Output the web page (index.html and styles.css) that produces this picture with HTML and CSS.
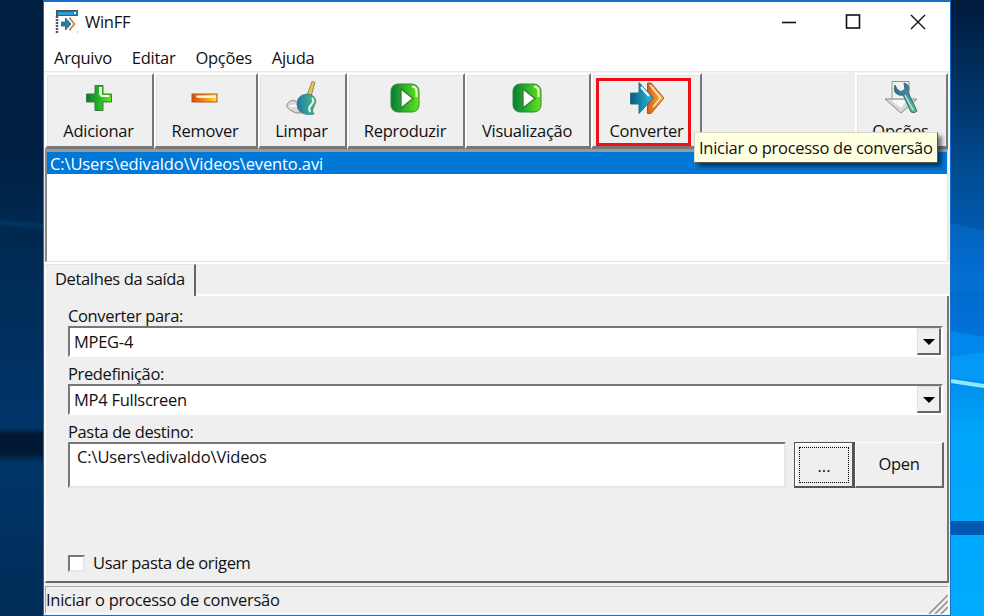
FILE: index.html
```
<!DOCTYPE html>
<html lang="pt-BR">
<head>
    <meta charset="UTF-8">
    <title>WinFF</title>
    <link rel="stylesheet" href="styles.css">
</head>
<body>
    <div class="wall wall-left"></div>
    <main class="window">
        <header class="titlebar">
            <svg class="app-icon" width="24" height="24" viewBox="0 0 24 24">
                <rect x="1" y="0" width="22" height="6" fill="#4c5a66"/>
                <rect x="3" y="2" width="17" height="3" fill="#2f9fd8"/>
                <rect x="18" y="1" width="4" height="4" fill="#1689cf"/>
                <rect x="19" y="2" width="2" height="2" fill="#fff"/>
                <path d="M2 6V23" stroke="#555" stroke-width="2.500" stroke-dasharray="2 1"/>
                <path d="M22 22h1" stroke="#999"/>
                <path d="M6.500 12h4V8l5.500 6-5.500 6v-4h-4z" fill="#267fae" stroke="#33566c" stroke-width=".8"/>
                <path d="M14.500 8l5 6-5 6" fill="none" stroke="#b5562a" stroke-width="1.600"/>
                <path d="M16 9.500l4 4.500-4 4.500" fill="none" stroke="#f1b53c" stroke-width="1"/>
            </svg>
            <span class="title">WinFF</span>
            <svg class="controls" width="146" height="20" viewBox="0 0 146 20" fill="none" stroke="#111" stroke-width="1.600">
                <path d="M1 11.500H15"/>
                <rect x="65.500" y="4" width="13" height="13"/>
                <path d="M130 4l14 14M144 4l-14 14" stroke-width="1.400"/>
            </svg>
        </header>
        <nav class="menu">
            <span>Arquivo</span>
            <span>Editar</span>
            <span>Opções</span>
            <span>Ajuda</span>
        </nav>
        <div class="toolbar">
            <div class="tool add">
                <svg width="34" height="34" viewBox="0 0 34 34">
                    <defs>
                        <linearGradient id="green"><stop offset="0" stop-color="#087b36"/><stop offset=".5" stop-color="#27b52b"/><stop offset="1" stop-color="#67e51b"/></linearGradient>
                    </defs>
                    <path d="M13 4.500h8v8.500h8.500v8H21v8.500h-8V21H4.500v-8H13z" fill="url(#green)" stroke="#3c7a36"/>
                    <path d="M17 6h3v8h7v2h-6q-4 0-4-4z" fill="#e6ffe0"/>
                </svg>
                <span>Adicionar</span>
            </div>
            <div class="tool remove">
                <svg width="34" height="34" viewBox="0 0 34 34">
                    <defs>
                        <linearGradient id="orange"><stop offset="0" stop-color="#e2490c"/><stop offset=".5" stop-color="#f58b12"/><stop offset="1" stop-color="#fde32c"/></linearGradient>
                    </defs>
                    <rect x="4" y="13" width="25" height="8" fill="url(#orange)" stroke="#a65d2c"/>
                    <path d="M8 14.500h20v2.500H11q-3 0-3-2.500z" fill="#fff3d0"/>
                </svg>
                <span>Remover</span>
            </div>
            <div class="tool clean">
                <svg width="34" height="36" viewBox="0 0 34 36">
                    <defs>
                        <linearGradient id="brush"><stop offset="0" stop-color="#2873a4"/><stop offset=".45" stop-color="#2e9b9d"/><stop offset="1" stop-color="#54ba78"/></linearGradient>
                    </defs>
                    <path d="M15 24q-7-6-11-2-5 4 1 8 5 4 11 3z" fill="#d9d9d9" stroke="#8d8d8d"/>
                    <path d="M5 27q4-3 9 0" fill="none" stroke="#fff" stroke-width="2"/>
                    <path d="M27 1.500l3 1-4 14-4-1z" fill="#e8c84e" stroke="#93845b"/>
                    <path d="M22 14q-10 1-10 10 0 8 8 10 5 1 9 0-3-3 0-8 4-6-1-10-2-2-6-2z" fill="url(#brush)" stroke="#38737b" stroke-width=".8"/>
                    <path d="M27 18q3 3-1 7-3 3-1 7" fill="none" stroke="#e8faf2" stroke-width="2"/>
                </svg>
                <span>Limpar</span>
            </div>
            <div class="tool play">
                <svg width="34" height="34" viewBox="0 0 34 34">
                    <rect x="3" y="3" width="28" height="28" rx="7" fill="url(#green)" stroke="#348537"/>
                    <path d="M24 5.500q4.500.5 4.500 4.500v6" fill="none" stroke="#e9ffc8" stroke-width="2"/>
                    <path d="M13 8l12 9.500L13 27z" fill="#fff" stroke="#347a2e" stroke-width="1.300"/>
                </svg>
                <span>Reproduzir</span>
            </div>
            <div class="tool preview">
                <svg width="34" height="34" viewBox="0 0 34 34">
                    <rect x="3" y="3" width="28" height="28" rx="7" fill="url(#green)" stroke="#348537"/>
                    <path d="M24 5.500q4.500.5 4.500 4.500v6" fill="none" stroke="#e9ffc8" stroke-width="2"/>
                    <path d="M13 8l12 9.500L13 27z" fill="#fff" stroke="#347a2e" stroke-width="1.300"/>
                </svg>
                <span>Visualização</span>
            </div>
            <div class="tool convert">
                <svg width="36" height="34" viewBox="0 0 36 34">
                    <defs>
                        <linearGradient id="blue"><stop offset="0" stop-color="#075982"/><stop offset="1" stop-color="#2bc1d8"/></linearGradient>
                        <linearGradient id="gold"><stop offset="0" stop-color="#dc5b18"/><stop offset="1" stop-color="#f7c42c"/></linearGradient>
                    </defs>
                    <path d="M18.500 2H22l13 15-13 15.500h-3.500V24l5.500-7-5.500-7z" fill="url(#gold)" stroke="#a15330"/>
                    <path d="M21 4l10 12" stroke="#ffe9c8" stroke-width="1.500"/>
                    <path d="M1.500 12H10V1.500L24 17 10 32.500V23H1.500z" fill="url(#blue)" stroke="#26718c"/>
                    <path d="M24 6v2l7.500 9-7.500 9" fill="none" stroke="#fbe7cf" stroke-width="1.200"/>
                    <path d="M12 6l8 9" stroke="#effcff" stroke-width="2.500"/>
                </svg>
                <span>Converter</span>
                <div class="marker"></div>
            </div>
            <div class="spacer"></div>
            <div class="tool options">
                <svg width="36" height="36" viewBox="0 0 36 36">
                    <path d="M9 2.500h17v21H9z" fill="#f2f2f2" stroke="#8d9495"/>
                    <path d="M2 20h32L18 34z" fill="#d7d9d9" stroke="#878b8b"/>
                    <path d="M8 21h16l-6 8z" fill="#f8f8f8"/>
                    <defs>
                        <linearGradient id="wrench" x1="0" y1="0" x2="1" y2="1"><stop offset="0" stop-color="#285f93"/><stop offset=".5" stop-color="#438ea1"/><stop offset="1" stop-color="#5dc788"/></linearGradient>
                    </defs>
                    <path d="M12 6q-2 7 2 9 3 2 6 1l8 17q3 2 6-1L25 13q3-7-4-9l1 6-4 3-4-3z" fill="url(#wrench)" stroke="#3c6d77"/>
                    <path d="M22 16l8 15" stroke="#c4eddb" stroke-width="1.500"/>
                </svg>
                <span>Opções</span>
            </div>
            <div class="tooltip"><span>Iniciar o processo de conversão</span></div>
        </div>
        <div class="files">
            <div class="file"><span>C:\Users\edivaldo\Videos\evento.avi</span></div>
        </div>
        <div class="tabs">
            <div class="tab"><span>Detalhes da saída</span></div>
            <div class="tab-rest"></div>
        </div>
        <section class="page">
            <div class="label"><span>Converter para:</span></div>
            <div class="combo">
                <span>MPEG-4</span>
                <div class="drop"></div>
            </div>
            <div class="label next"><span>Predefinição:</span></div>
            <div class="combo">
                <span>MP4 Fullscreen</span>
                <div class="drop"></div>
            </div>
            <div class="label next"><span>Pasta de destino:</span></div>
            <div class="folder">
                <div class="path"><span>C:\Users\edivaldo\Videos</span></div>
                <div class="browse"><div class="focus">...</div></div>
                <div class="open"><span>Open</span></div>
            </div>
            <div class="check">
                <div class="box"></div>
                <span>Usar pasta de origem</span>
            </div>
        </section>
        <footer class="status">
            <span>Iniciar o processo de conversão</span>
            <svg width="20" height="20" viewBox="0 0 20 20" stroke="#8c8c8c" stroke-width="1.500">
                <path d="M1 20L20 1M7 20L20 7M13 20l7-7"/>
            </svg>
        </footer>
    </main>
    <div class="wall wall-right">
        <svg width="33" height="616" viewBox="0 0 33 616">
            <defs>
                <linearGradient id="sky" x1="0" y1="0" x2="0" y2="1">
                    <stop offset="0" stop-color="#001a3a"/>
                    <stop offset=".09" stop-color="#002a55"/>
                    <stop offset=".2" stop-color="#003c77"/>
                    <stop offset=".3" stop-color="#00509a"/>
                    <stop offset=".37" stop-color="#0059ad"/>
                    <stop offset=".45" stop-color="#0068cb"/>
                    <stop offset=".54" stop-color="#0072d8"/>
                    <stop offset=".62" stop-color="#0090ee"/>
                    <stop offset=".7" stop-color="#00a5fa"/>
                    <stop offset="1" stop-color="#00acff"/>
                </linearGradient>
            </defs>
            <rect width="33" height="616" fill="url(#sky)"/>
            <path d="M0 223l33 8v60H0z" fill="#0878df" opacity=".35"/>
            <path d="M0 331l33 6v17l-33 4z" fill="#0087ed"/>
            <path d="M0 357l33-5v29l-33-3z" fill="#0499f5"/>
            <path d="M0 381l33 5" stroke="#8eeaff" stroke-width="4"/>
            <rect y="521" width="33" height="14" fill="#0058b0"/>
        </svg>
    </div>
</body>
</html>
```
FILE: styles.css
```
* {
    box-sizing: border-box;
}
body {
    margin: 0;
    width: 984px;
    height: 616px;
    overflow: hidden;
    display: flex;
    font-family: "Open Sans", "Noto Sans", sans-serif;
    font-size: 16.5px;
    line-height: 22px;
    letter-spacing: -0.27px;
    color: #111;
    background: #002c58;
}
span {
    white-space: nowrap;
}
svg {
    display: block;
    flex: none;
}
.wall-left {
    width: 43px;
    background:
        linear-gradient(transparent 428px, #001834 434px, #001834 454px, transparent 462px),
        linear-gradient(184deg, #00407300 221px, #00407399 225px, #00407300 230px),
        linear-gradient(#001e3f, #001f42 140px, #002850 225px, #002f5d 330px, #00356a 425px, #003568 470px, #002c57);
}
.wall-right {
    width: 33px;
}
.window {
    width: 908px;
    height: 616px;
    border: 1px solid #1672c6;
    border-top-width: 2px;
    background: #efefef;
    display: flex;
    flex-direction: column;
}
.titlebar {
    height: 43px;
    background: #fff;
    display: flex;
    padding: 8px 23px 0 11px;
}
.title {
    margin: 1px 0 0 6px;
}
.controls {
    margin: 1px 0 0 auto;
}
.menu {
    height: 27px;
    background: #fff;
    border-bottom: 1px solid #e8e8e8;
    padding: 2px 10px;
    display: flex;
    gap: 20px;
}

/* toolbar */
.toolbar {
    height: 77px;
    padding: 1px 2px 0 1px;
    display: flex;
    background: #f5f5f5;
    position: relative;
}
.tool {
    height: 76px;
    border: 2px solid #fff;
    border-right: 2px solid #777;
    border-bottom: 3px solid #777;
    background: #efefef;
    box-shadow: inset 1px 1px #e2e2e2;
    display: flex;
    flex-direction: column;
    align-items: center;
    padding-top: 6px;
    padding-right: 2px;
    position: relative;
}
.tool span {
    margin-top: auto;
    margin-bottom: 4px;
}
.add { width: 109px; }
.remove { width: 104px; }
.clean { width: 89px; padding-top: 5px; }
.play { width: 118px; }
.preview { width: 126px; }
.convert { width: 111px; padding-right: 0; }
.options { width: 93px; padding-top: 4px; }
.spacer {
    flex: 1;
    background: #efefef;
    border-bottom: 2px solid #ddd;
}
.marker {
    position: absolute;
    left: 3px;
    top: 3px;
    width: 95px;
    height: 68px;
    border: 3px solid #ed1016;
}
.tooltip {
    position: absolute;
    left: 650px;
    top: 60px;
    width: 244px;
    height: 31px;
    padding: 4px;
    background: #ffffe1;
    border: 1px solid #d8d8c8;
    border-right-color: #555;
    border-bottom-color: #555;
    box-shadow: 4px 4px 4px rgba(0, 0, 0, 0.5);
    z-index: 2;
}

/* file list */
.files {
    height: 113px;
    margin: 0 2px 0 1px;
    border: 1px solid #e3e3e3;
    border-top: 3px solid #999;
    border-left: 2px solid #888;
    background: #fff;
}
.file {
    height: 22px;
    padding-left: 3px;
    line-height: 23px;
    letter-spacing: -0.13px;
    background: #0078d7;
    color: #fff;
}

/* tabs */
.tabs {
    height: 34px;
    padding: 2px 1px 0;
    background: linear-gradient(#fff 2px, #efefef 2px);
    display: flex;
}
.tab {
    width: 151px;
    height: 32px;
    padding: 3px 0 0 9px;
    border-left: 1px solid #fff;
    border-top: 1px solid #e3e3e3;
    border-right: 2px solid #666;
    letter-spacing: -0.36px;
}
.tab-rest {
    flex: 1;
    border-bottom: 2px solid #fff;
}
.page {
    height: 287px;
    margin: 0 1px;
    padding: 9px 0 0 22px;
    border-left: 1px solid #fff;
    border-right: 2px solid #777;
    border-bottom: 2px solid #666;
}
.label {
    height: 21px;
    line-height: 21px;
    letter-spacing: -0.36px;
}
.next {
    height: 27px;
    padding-top: 6px;
}
.combo {
    width: 875px;
    height: 31px;
    padding-left: 4px;
    border: 2px solid #777;
    border-right-color: #fff;
    border-bottom-color: #fff;
    background: #fff;
    display: flex;
    justify-content: space-between;
    line-height: 28px;
}
.drop {
    width: 24px;
    height: 27px;
    border: 1px solid #e0e0e0;
    border-right: 2px solid #666;
    border-bottom: 2px solid #666;
    background: #efefef;
    display: flex;
    align-items: center;
    justify-content: center;
}
.drop::before {
    content: "";
    border: 6px solid transparent;
    border-top-color: #000;
    border-bottom: 0;
    margin-top: 2px;
}
.folder {
    display: flex;
    height: 47px;
}
.path {
    width: 718px;
    height: 46px;
    padding: 2px 7px;
    border: 2px solid #777;
    border-right-color: #e8e8e8;
    border-bottom-color: #e8e8e8;
    background: #fff;
    letter-spacing: -0.13px;
}
.browse {
    width: 61px;
    height: 46px;
    margin-left: 8px;
    padding: 3px;
    border: 1px solid #555;
    border-right-width: 3px;
    border-bottom-width: 2px;
    box-shadow: inset 2px 2px #fff;
}
.focus {
    margin: 1px 0 0 1px;
    width: 50px;
    height: 36px;
    border: 1px dotted #000;
    text-align: center;
    line-height: 35px;
    letter-spacing: 0;
}
.open {
    width: 89px;
    height: 46px;
    border: 1px solid #fff;
    border-right: 2px solid #666;
    border-bottom: 2px solid #666;
    text-align: center;
    line-height: 42px;
}
.check {
    display: flex;
    margin-top: 63px;
}
.box {
    width: 17px;
    height: 17px;
    margin: 3px 8px 0 0;
    border: 2px solid #777;
    border-right-color: #e8e8e8;
    border-bottom-color: #e8e8e8;
    background: #fff;
}
.check span {
    letter-spacing: -0.35px;
}
.status {
    height: 28px;
    margin: 3px 1px 0;
    border: 1px solid #aaa;
    border-right-color: #fff;
    border-bottom-color: #fff;
    display: flex;
    justify-content: space-between;
    padding: 2px 0 0;
}
.status svg {
    margin-top: 5px;
}
```
